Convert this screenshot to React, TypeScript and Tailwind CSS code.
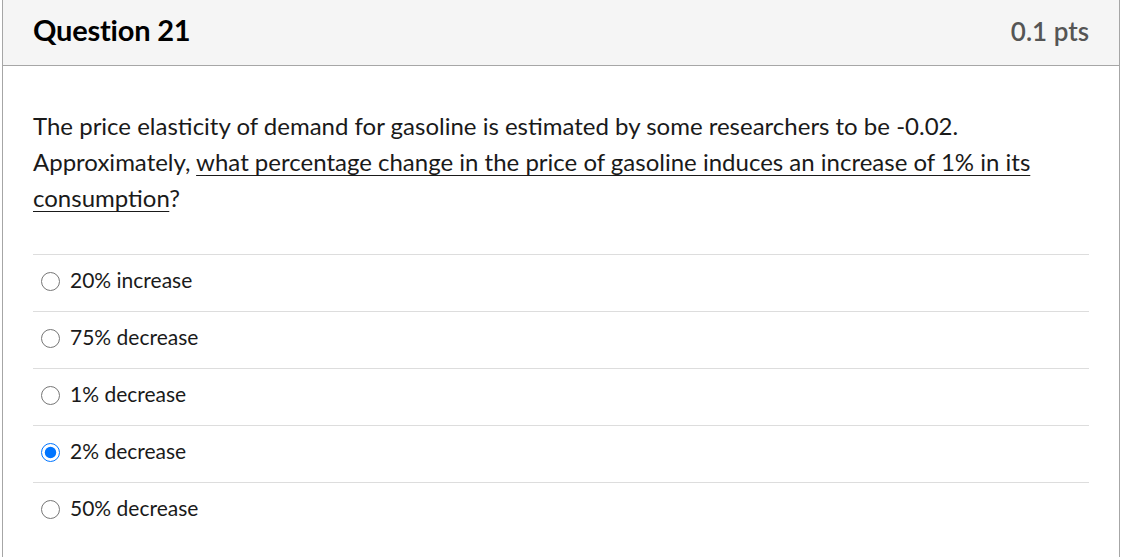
import { useState } from "react";

const answers = ["20% increase", "75% decrease", "1% decrease", "2% decrease", "50% decrease"];

export default function App() {
  const [selected, setSelected] = useState(3);

  return (
    <div className="h-[557px] w-[1125px] overflow-hidden bg-white font-['Lato',sans-serif] text-[#000]">
      <div className="ml-[2px] h-[557px] w-[1118px] border-x border-[#a6a6a6]">
        {/* Header */}
        <div className="flex h-[66px] items-center justify-between border-b border-[#a6a6a6] bg-[#f5f5f5] pl-[30px] pr-[30px]">
          <h2 className="pb-[6px] text-[29px] font-bold leading-none tracking-[-0.2px]">Question 21</h2>
          <span className="pb-[4px] text-[26px] font-semibold leading-none text-[#555]">0.1 pts</span>
        </div>

        {/* Body */}
        <div className="px-[30px] pt-[42px]">
          <p className="text-[24px] leading-[36px] text-[#1a1a1a]">
            The price elasticity of demand for gasoline is estimated by some researchers to be -0.02.
            Approximately,{" "}
            <span className="underline underline-offset-[4px] decoration-1">
              what percentage change in the price of gasoline induces an increase of 1% in its consumption
            </span>
            ?
          </p>

          <div className="mt-[38px]">
            {answers.map((a, i) => (
              <label
                key={a}
                className="flex h-[57px] cursor-pointer items-center gap-[10px] border-t border-[#dddddd] pb-[7px] pl-[8px]"
              >
                <input
                  type="radio"
                  name="q21"
                  checked={selected === i}
                  onChange={() => setSelected(i)}
                  className="m-0 mt-[3px] h-[19px] w-[19px] accent-[#0075ff]"
                />
                <span className="text-[21px] leading-none text-[#1a1a1a]">{a}</span>
              </label>
            ))}
          </div>
        </div>
      </div>
    </div>
  );
}
